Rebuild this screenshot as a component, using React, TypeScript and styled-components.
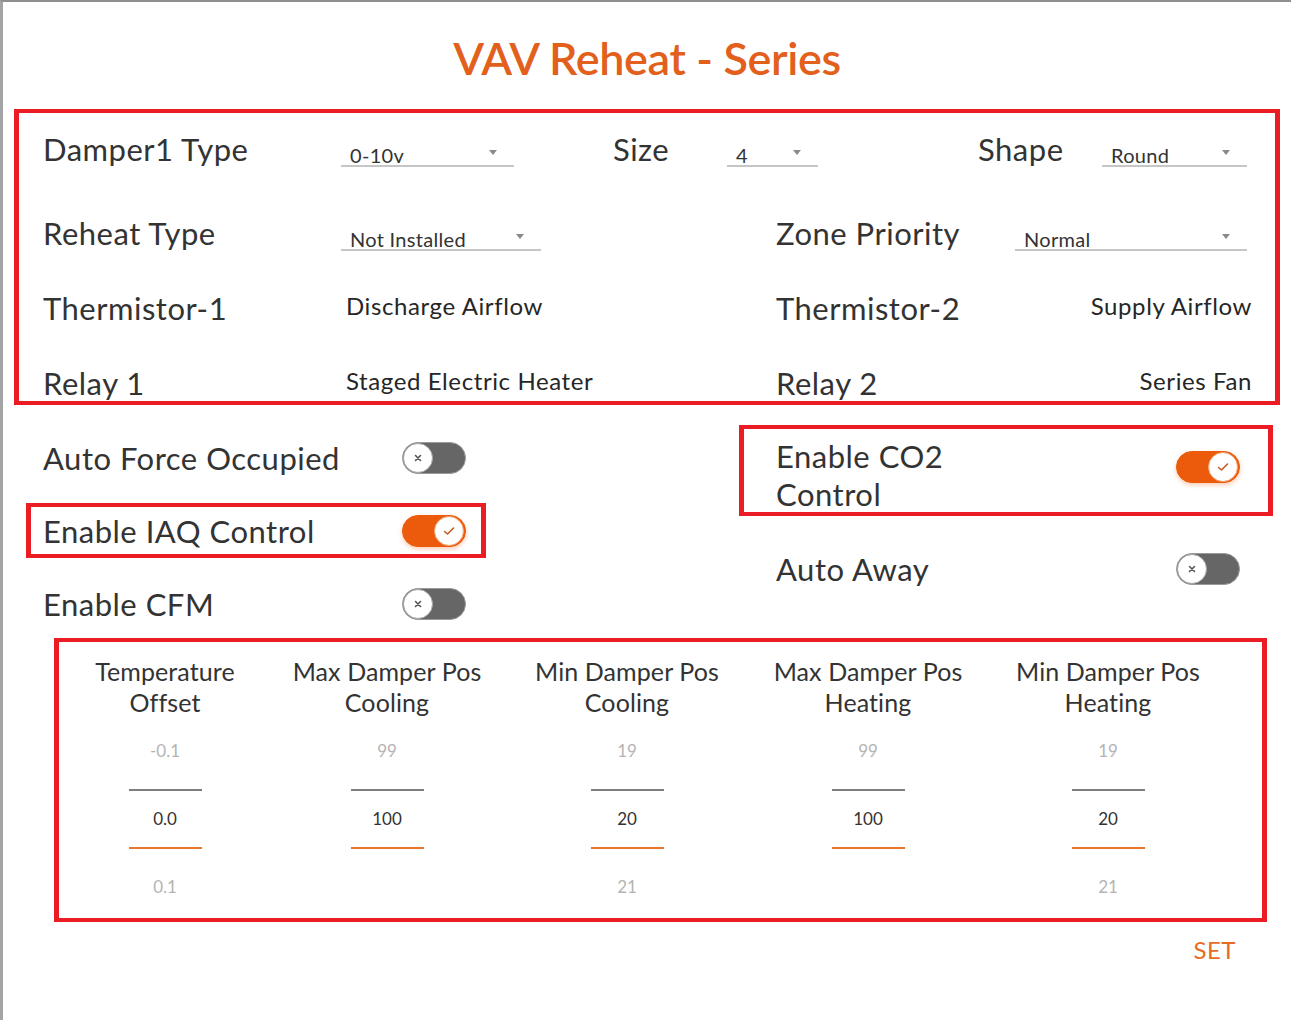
import React from 'react'
import styled, { createGlobalStyle } from 'styled-components'

const palette = {
  text: '#333333',
  value: '#262626',
  faint: '#b4b4b4',
  orange: '#e2601c',
  switchOn: '#ec5a0c',
  switchOff: '#666666',
  mark: '#ec1c24',
  underline: '#c6c6c6',
}

const GlobalStyle = createGlobalStyle`
  html, body {
    margin: 0;
    padding: 0;
    background: #ffffff;
  }
  body {
    font-family: Lato, 'Liberation Sans', sans-serif;
    color: ${palette.text};
  }
  * {
    box-sizing: border-box;
  }
`

type Column = {
  title: string[]
  prev?: string
  value: string
  next?: string
}

const pickerColumns: Column[] = [
  { title: ['Temperature', 'Offset'], prev: '-0.1', value: '0.0', next: '0.1' },
  { title: ['Max Damper Pos', 'Cooling'], prev: '99', value: '100' },
  { title: ['Min Damper Pos', 'Cooling'], prev: '19', value: '20', next: '21' },
  { title: ['Max Damper Pos', 'Heating'], prev: '99', value: '100' },
  { title: ['Min Damper Pos', 'Heating'], prev: '19', value: '20', next: '21' },
]

// 選択中の項目を赤枠で囲む（左右は太め）
const markedBorder = (marked: boolean) =>
  `border-style: solid; border-width: 4px 5px; border-color: ${marked ? palette.mark : 'transparent'};`

export default function App() {
  return (
    <>
      <GlobalStyle />
      <Page>
        <Title>VAV Reheat - Series</Title>

        <ConfigBox>
          <TopRow $gap={0}>
            <Label>Damper1 Type</Label>
            <Select $width={173} value="0-10v" />
            <Label>Size</Label>
            <Select $width={91} value="4" />
            <Label>Shape</Label>
            <Select $width={145} value="Round" />
          </TopRow>

          <HalfRow $gap={48}>
            <Label>Reheat Type</Label>
            <Select $width={200} value="Not Installed" />
            <Label>Zone Priority</Label>
            <Select $width={232} value="Normal" />
          </HalfRow>

          <HalfRow $gap={39}>
            <Label>Thermistor-1</Label>
            <Value>Discharge Airflow</Value>
            <Label>Thermistor-2</Label>
            <Value $right>Supply Airflow</Value>
          </HalfRow>

          <HalfRow $gap={39}>
            <Label>Relay 1</Label>
            <Value>Staged Electric Heater</Value>
            <Label>Relay 2</Label>
            <Value $right>Series Fan</Value>
          </HalfRow>
        </ConfigBox>

        <ToggleArea>
          <LeftToggles>
            <ToggleRow>
              <Label>Auto Force Occupied</Label>
              <Switch on={false} />
            </ToggleRow>
            <ToggleRow $marked>
              <Label>Enable IAQ Control</Label>
              <Switch on />
            </ToggleRow>
            <ToggleRow>
              <Label>Enable CFM</Label>
              <Switch on={false} />
            </ToggleRow>
          </LeftToggles>

          <RightToggles>
            <WideToggleRow $marked $tall>
              <MultiLabel>
                Enable CO2
                <br />
                Control
              </MultiLabel>
              <SwitchSlot $top={22}>
                <Switch on />
              </SwitchSlot>
            </WideToggleRow>
            <WideToggleRow>
              <Label>Auto Away</Label>
              <Switch on={false} />
            </WideToggleRow>
          </RightToggles>
        </ToggleArea>

        <PickerBox>
          {pickerColumns.map((col, index) => (
            <PickerColumn key={index}>
              <PickerTitle>
                {col.title.map((line, i) => (
                  <div key={i}>{line}</div>
                ))}
              </PickerTitle>
              <WheelItem>{col.prev ?? ''}</WheelItem>
              <WheelSelected>{col.value}</WheelSelected>
              <WheelItem $below>{col.next ?? ''}</WheelItem>
            </PickerColumn>
          ))}
        </PickerBox>

        <Footer>
          <SetButton>SET</SetButton>
        </Footer>
      </Page>
    </>
  )
}

const Select = ({ value, $width }: { value: string; $width: number }) => (
  <SelectBox $width={$width}>
    <span>{value}</span>
    <Caret />
  </SelectBox>
)

const Switch = ({ on }: { on: boolean }) => (
  <SwitchTrack $on={on}>
    <Knob $on={on}>
      {on ? (
        <svg width="12" height="10" viewBox="0 0 12 10">
          <polyline
            points="1.5,5.5 4.5,8 10.5,2"
            fill="none"
            stroke="#c45a24"
            strokeWidth="1.6"
            strokeLinecap="round"
            strokeLinejoin="round"
          />
        </svg>
      ) : (
        <svg width="10" height="10" viewBox="0 0 10 10">
          <path
            d="M2.5 2.5 L7.5 7.5 M7.5 2.5 L2.5 7.5"
            stroke="#555"
            strokeWidth="1.6"
            strokeLinecap="round"
          />
        </svg>
      )}
    </Knob>
  </SwitchTrack>
)

const Page = styled.div`
  width: 1291px;
  height: 1020px;
  border-top: 2px solid #8f8f8f;
  border-left: 3px solid #a4a4a4;
  background: #ffffff;
  overflow: hidden;
`

const Title = styled.h1`
  margin: 0 0 26px;
  padding-top: 31px;
  font-size: 45px;
  line-height: 50px;
  font-weight: 600;
  text-align: center;
  color: ${palette.orange};
  letter-spacing: -0.4px;
`

const ConfigBox = styled.div`
  margin-left: 11px;
  width: 1266px;
  height: 296px;
  ${markedBorder(true)}
  padding: 18px 0 0 24px;
  display: flex;
  flex-direction: column;
`

const TopRow = styled.div<{ $gap: number }>`
  display: grid;
  grid-template-columns: 298px 272px 114px 251px 124px 145px;
  align-items: center;
  height: 36px;
  margin-top: ${(p) => p.$gap}px;
`

const HalfRow = styled(TopRow)`
  grid-template-columns: 298px 435px 239px 237px;
`

const Label = styled.div`
  font-size: 31px;
  line-height: 36px;
  letter-spacing: 0.5px;
  color: ${palette.text};
  white-space: nowrap;
`

const MultiLabel = styled(Label)`
  line-height: 38px;
  padding-top: 8px;
`

const Value = styled.div<{ $right?: boolean }>`
  font-size: 24px;
  color: ${palette.value};
  white-space: nowrap;
  padding-left: ${(p) => (p.$right ? 0 : 5)}px;
  text-align: ${(p) => (p.$right ? 'right' : 'left')};
  letter-spacing: 0.6px;
  margin-top: -6px;
`

const SelectBox = styled.div<{ $width: number }>`
  align-self: end;
  width: ${(p) => p.$width}px;
  height: 30px;
  display: flex;
  align-items: center;
  justify-content: space-between;
  padding: 8px 17px 0 9px;
  border-bottom: 2px solid ${palette.underline};
  font-size: 20px;
  letter-spacing: 0.3px;
  color: ${palette.text};
  white-space: nowrap;
`

const Caret = styled.i`
  width: 0;
  height: 0;
  margin-top: -6px;
  border-left: 4px solid transparent;
  border-right: 4px solid transparent;
  border-top: 5px solid #8a8a8a;
`

const ToggleArea = styled.div`
  display: grid;
  grid-template-columns: 460px 534px;
  column-gap: 253px;
  margin: 20px 0 0 23px;
`

const LeftToggles = styled.div`
  display: flex;
  flex-direction: column;
  gap: 18px;
  padding-top: 5px;
`

const RightToggles = styled.div`
  display: flex;
  flex-direction: column;
  gap: 25px;
`

const ToggleRow = styled.div<{ $marked?: boolean }>`
  display: flex;
  align-items: center;
  justify-content: space-between;
  height: 55px;
  padding: 0 15px 0 12px;
  ${(p) => markedBorder(!!p.$marked)}
`

const WideToggleRow = styled(ToggleRow)<{ $tall?: boolean }>`
  height: ${(p) => (p.$tall ? 91 : 55)}px;
  align-items: ${(p) => (p.$tall ? 'flex-start' : 'center')};
  padding: 0 28px 0 32px;
`

const SwitchSlot = styled.div<{ $top: number }>`
  margin-top: ${(p) => p.$top}px;
`

const SwitchTrack = styled.div<{ $on: boolean }>`
  position: relative;
  width: 64px;
  height: 32px;
  border-radius: 16px;
  background: ${(p) => (p.$on ? palette.switchOn : palette.switchOff)};
  border: 1px solid ${(p) => (p.$on ? palette.switchOn : '#9a9a9a')};
  box-shadow: ${(p) => (p.$on ? '0 2px 4px rgba(236, 110, 30, 0.35)' : 'none')};
  flex-shrink: 0;
`

const Knob = styled.div<{ $on: boolean }>`
  position: absolute;
  top: 0;
  left: ${(p) => (p.$on ? 31 : 0)}px;
  width: 30px;
  height: 30px;
  border-radius: 50%;
  background: #ffffff;
  border: 1px solid ${(p) => (p.$on ? '#f2a06c' : '#a8a8a8')};
  display: flex;
  align-items: center;
  justify-content: center;
`

const PickerBox = styled.div`
  margin: 7px 0 0 51px;
  width: 1213px;
  height: 284px;
  ${markedBorder(true)}
  padding-top: 14px;
  display: grid;
  grid-template-columns: 212px 232px 248px 234px 246px;
  align-items: start;
`

const PickerColumn = styled.div`
  display: flex;
  flex-direction: column;
  align-items: center;
`

const PickerTitle = styled.div`
  font-size: 25px;
  line-height: 31px;
  text-align: center;
  color: ${palette.text};
  white-space: nowrap;
  letter-spacing: 0.1px;
  margin-bottom: 13px;
`

const WheelItem = styled.div<{ $below?: boolean }>`
  height: 40px;
  line-height: 40px;
  font-size: 17px;
  color: ${palette.faint};
  margin: ${(p) => (p.$below ? '18px 0 0' : '0 0 18px')};
`

const WheelSelected = styled.div`
  width: 73px;
  height: 60px;
  line-height: 56px;
  text-align: center;
  font-size: 17px;
  color: ${palette.text};
  border-top: 2px solid #7e7e7e;
  border-bottom: 2px solid #e8772e;
`

const Footer = styled.div`
  display: flex;
  justify-content: flex-end;
  padding: 13px 55px 0 0;
`

const SetButton = styled.button`
  border: none;
  background: none;
  padding: 0;
  font-family: inherit;
  font-size: 24px;
  line-height: 30px;
  color: #e66c26;
  letter-spacing: 0.5px;
  cursor: pointer;
`
